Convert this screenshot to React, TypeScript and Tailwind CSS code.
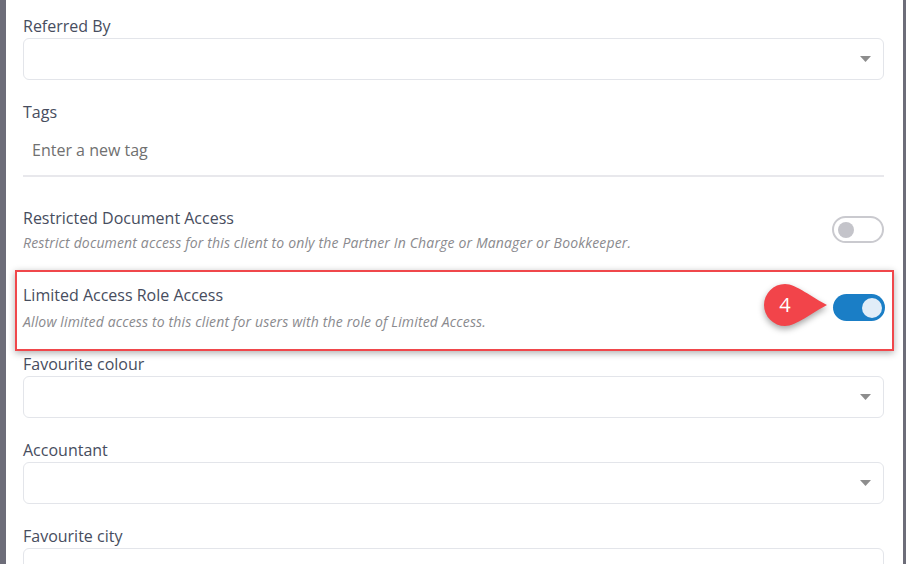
import React from 'react';

const labelCls = "block h-6 leading-6 text-[16px] text-[#474d5e] font-['Open_Sans',sans-serif]";
const descCls = "h-5 leading-5 text-[14px] tracking-[0.15px] italic text-[#8a8a8e] font-['Open_Sans',sans-serif]";

function Caret() {
  return (
    <svg width="11" height="6" viewBox="0 0 11 6" className="text-[#8d8d8d]">
      <path d="M0 0h11L5.5 6z" fill="currentColor" />
    </svg>
  );
}

function SelectField({ label, className = '' }: { label: string; className?: string }) {
  return (
    <div className={className}>
      <label className={labelCls}>{label}</label>
      <div className="flex h-[42px] items-center justify-end rounded-md border border-[#e3e5ea] bg-white pr-[12px]">
        <Caret />
      </div>
    </div>
  );
}

function Toggle({ on }: { on: boolean }) {
  if (on) {
    return (
      <div className="flex h-[27px] w-[52px] shrink-0 items-center justify-end rounded-full bg-[#1a7ec6] pr-[3px]">
        <div className="h-[20px] w-[20px] rounded-full bg-[#e1edf8]" />
      </div>
    );
  }
  return (
    <div className="flex h-[27px] w-[52px] shrink-0 items-center rounded-full border-2 border-[#cacacf] bg-white pl-[4px]">
      <div className="h-[16px] w-[16px] rounded-full bg-[#c4c4ca]" />
    </div>
  );
}

function Badge() {
  return (
    <div className="absolute left-[745px] top-[10px] h-[46px] w-[68px]">
      <svg width="68" height="46" viewBox="0 0 68 46" className="drop-shadow-[0_3px_3px_rgba(0,0,0,0.35)]">
        <path
          d="M23 2 A21 21 0 1 0 23 44 C34 44 51 30 65 23 C51 16 34 2 23 2 Z"
          fill="#f2444a"
        />
      </svg>
      <span className="absolute left-0 top-0 flex h-[46px] w-[46px] items-center justify-center text-[20px] text-white font-['Open_Sans',sans-serif]">
        4
      </span>
    </div>
  );
}

export default function App() {
  return (
    <div className="flex h-[564px] w-[906px] overflow-hidden bg-[#6c6c78]">
      <div className="w-[6px] shrink-0 bg-[#6d6d79]" />
      <div className="flex-1 bg-white pl-[17px] pr-[19px] pt-[14px]">
        <SelectField label="Referred By" />

        <div className="mt-[20px]">
          <label className={labelCls}>Tags</label>
          <div className="flex h-[53px] items-center border-b-2 border-[#e8e8ec] pl-[9px] text-[16px] text-[#707070] font-['Open_Sans',sans-serif]">
            Enter a new tag
          </div>
        </div>

        <div className="mt-[29px] flex items-center justify-between">
          <div>
            <div className={labelCls}>Restricted Document Access</div>
            <div className={`mt-[3px] ${descCls}`}>
              Restrict document access for this client to only the Partner In Charge or Manager or Bookkeeper.
            </div>
          </div>
          <Toggle on={false} />
        </div>

        <div className="relative -ml-[8px] -mr-[10px] mt-[17px] border-2 border-[#f0474b] pb-[17px] pl-[6px] pr-[7px] pt-[11px] shadow-[0_2px_7px_rgba(0,0,0,0.32)]">
          <div className="flex items-center justify-between">
            <div>
              <div className={labelCls}>Limited Access Role Access</div>
              <div className={`mt-[5px] ${descCls}`}>
                Allow limited access to this client for users with the role of Limited Access.
              </div>
            </div>
            <Toggle on={true} />
          </div>
          <Badge />
        </div>

        <SelectField label="Favourite colour" className="mt-[1px]" />
        <SelectField label="Accountant" className="mt-[20px]" />
        <SelectField label="Favourite city" className="mt-[20px]" />
      </div>
      <div className="w-[3px] shrink-0 bg-[#6d6d79]" />
    </div>
  );
}
